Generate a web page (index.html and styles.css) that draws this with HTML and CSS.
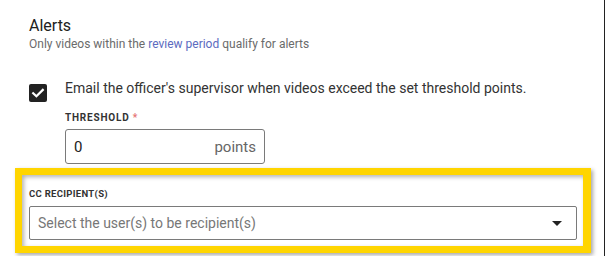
FILE: index.html
```html
<!DOCTYPE html>
<html>
<head>
<meta charset="utf-8">
<link rel="stylesheet" href="styles.css">
</head>
<body>
<div class="page">
  <div class="section">
    <h2 class="title">Alerts</h2>
    <p class="subtitle">Only videos within the <a class="link" href="#">review period</a> qualify for alerts</p>
    <div class="check-row">
      <span class="checkbox">
        <svg width="18" height="18" viewBox="0 0 18 18"><path d="M4.2 9.2 L7.4 12.3 L13.8 5.9" fill="none" stroke="#fff" stroke-width="2.2" stroke-linecap="square"/></svg>
      </span>
      <span class="check-label">Email the officer's supervisor when videos exceed the set threshold points.</span>
    </div>
    <div class="threshold">
      <div class="field-label threshold-label">THRESHOLD <span class="req">*</span></div>
      <div class="input-box">
        <span class="input-value">0</span>
        <span class="suffix">points</span>
      </div>
    </div>
  </div>
  <div class="highlight">
    <div class="field-label cc-label">CC RECIPIENT(S)</div>
    <div class="select">
      <span class="placeholder">Select the user(s) to be recipient(s)</span>
      <svg class="caret" width="10" height="5" viewBox="0 0 10 5"><path d="M0 0 L10 0 L5 5 Z" fill="#222"/></svg>
    </div>
  </div>
</div>
</body>
</html>
```
FILE: styles.css
```css
html, body {
  margin: 0;
  padding: 0;
  background: #fff;
}
body {
  font-family: Roboto, "Liberation Sans", sans-serif;
  color: #212121;
}
.page {
  width: 604px;
  height: 256px;
  border-right: 1px solid #222;
  overflow: hidden;
}
.section {
  padding: 16px 0 0 29px;
}
.title {
  margin: 0;
  font-size: 16px;
  line-height: 20px;
  font-weight: 400;
  color: #212121;
}
.subtitle {
  margin: 0;
  font-size: 12px;
  line-height: 16px;
  color: #6b6b6b;
}
.link {
  color: #5c6bc0;
  text-decoration: none;
}
.check-row {
  display: flex;
  align-items: flex-start;
  margin-top: 32px;
}
.checkbox {
  width: 18px;
  height: 18px;
  border-radius: 2px;
  background: #222;
  display: flex;
  flex-shrink: 0;
}
.check-label {
  margin-left: 18px;
  margin-top: -6px;
  font-size: 14px;
  line-height: 20px;
  color: #333;
}
.threshold {
  margin-left: 36px;
  margin-top: 10px;
}
.field-label {
  line-height: 12px;
  font-weight: 700;
  color: #333;
}
.threshold-label {
  font-size: 10px;
  letter-spacing: 0.8px;
}
.cc-label {
  font-size: 9.5px;
  letter-spacing: 0.3px;
}
.req {
  color: #e57373;
}
.input-box {
  margin-top: 5px;
  width: 200px;
  height: 35px;
  box-sizing: border-box;
  border: 1px solid #7a7a7a;
  border-radius: 3px;
  display: flex;
  align-items: center;
  justify-content: space-between;
  padding: 0 8px 0 8px;
  font-size: 15px;
}
.input-value {
  color: #222;
}
.suffix {
  color: #666;
}
.highlight {
  margin: 4px 0 0 15px;
  width: 576px;
  box-sizing: border-box;
  border: 7px solid #ffd500;
  border-right-width: 8px;
  padding: 13px 6px 6px 7px;
  box-shadow: 2px 2px 4px rgba(0,0,0,0.35), inset 2px 2px 4px rgba(0,0,0,0.3);
}
.select {
  margin-top: 6px;
  height: 34px;
  box-sizing: border-box;
  border: 1px solid #7a7a7a;
  border-radius: 2px;
  display: flex;
  align-items: center;
  justify-content: space-between;
  padding: 0 14px 0 8px;
}
.placeholder {
  font-size: 14px;
  color: #777;
}
.caret {
  display: block;
}
```
